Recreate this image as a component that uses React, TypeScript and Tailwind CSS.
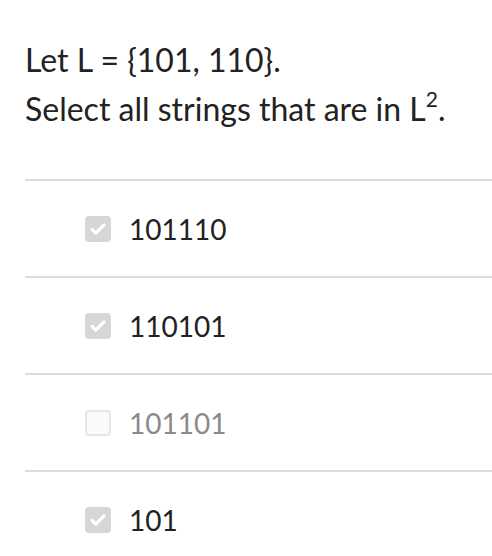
const options = [
  { label: "101110", checked: true },
  { label: "110101", checked: true },
  { label: "101101", checked: false },
  { label: "101", checked: true },
];

function Tick() {
  return (
    <svg viewBox="0 0 24 24" className="h-[18px] w-[18px]" fill="none">
      <path d="M4 12.5l5 5L20 6.5" stroke="white" strokeWidth={4.2} strokeLinecap="round" strokeLinejoin="round" />
    </svg>
  );
}

export default function App() {
  return (
    <div className="min-h-[556px] bg-white pl-[25px] pt-[35px] font-['Lato',sans-serif] text-[#222]">
      <p className="text-[32px] leading-[49px]">Let L = {"{"}101, 110{"}"}.</p>
      <p className="text-[32px] leading-[49px]">
        Select all strings that are in L
        <sup className="relative -top-[14px] align-baseline text-[21px] leading-none">2</sup>.
      </p>

      <ul className="mt-[46px]">
        {options.map((o) => (
          <li
            key={o.label}
            className="flex h-[97px] items-center border-t-2 border-[#dcdcdc] pl-[60px]"
          >
            <span
              className={`flex h-[26px] w-[26px] items-center justify-center rounded-[4px] ${
                o.checked ? "bg-[#d6d6d6]" : "border-2 border-[#e6e6e6] bg-[#fafafa]"
              }`}
            >
              {o.checked && <Tick />}
            </span>
            <span
              className={`ml-[18px] text-[28px] ${o.checked ? "text-[#222]" : "text-[#8a8a8a]"}`}
            >
              {o.label}
            </span>
          </li>
        ))}
      </ul>
    </div>
  );
}
